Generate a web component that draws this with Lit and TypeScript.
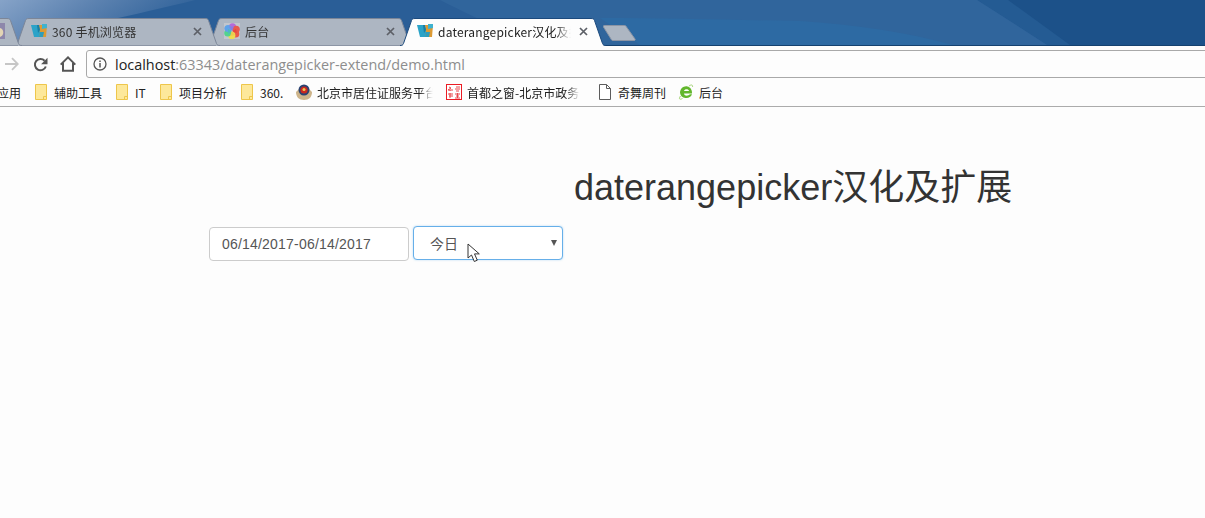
import { LitElement, html, css, svg, unsafeCSS } from "lit";
import { customElement } from "lit/decorators.js";

const CJK = unsafeCSS(`"Noto Sans CJK SC", "Liberation Sans", sans-serif`);

const wsIcon = html`<svg class="fav" viewBox="0 0 16 16">
  <path d="M0 2h7l2 3v9H3z" fill="#2ba3c8"/>
  <path d="M8 2h8l-1 12H8l1-4z" fill="#dc9a34"/>
  <path d="M6 2l2 0 1 5-2 3z" fill="#1a7ea4"/>
  <path d="M11 1h5v4l-5 1z" fill="#3fb2cf"/>
  <path d="M9 9h4l-1 5H8z" fill="#2f9dbb"/>
</svg>`;

const oldIcon = html`<svg class="fav" viewBox="0 0 16 16">
  <rect width="16" height="16" fill="#8d87ab"/>
  <path d="M4 11c0-4 3-6 6-6s5 3 4 6-3 3-5 3-5-1-5-3z" fill="#e3d5b4"/>
</svg>`;

const wheelIcon = html`<svg class="fav" viewBox="0 0 16 16">
  <rect width="16" height="16" fill="#c2c6cd"/>
  <circle cx="8.500" cy="3.800" r="3.600" fill="#b56ad9"/>
  <circle cx="12.200" cy="6.300" r="3.600" fill="#e85a50"/>
  <circle cx="11.700" cy="11" r="3.600" fill="#e9594a"/>
  <circle cx="7.800" cy="12.400" r="3.600" fill="#ecdd4f"/>
  <circle cx="3.800" cy="10" r="3.600" fill="#52d38e"/>
  <circle cx="4" cy="5.500" r="3.600" fill="#5fa3ea"/>
  <path d="M8 8L5 3.500h5z" fill="#8d7ae0"/>
  <path d="M8 8l4-2 1 4z" fill="#e5483f"/>
  <path d="M8 8l3 4-5 1z" fill="#ecc94f"/>
  <path d="M8 8l-4 3 0-5z" fill="#4fb8c0"/>
</svg>`;

const folder = html`<svg class="folder" viewBox="0 0 12 16">
  <path d="M.5.5h11v15H.5z" fill="#fde89a" stroke="#eec64b"/>
  <path d="M8.500 15.500v-3h3" fill="none" stroke="#eec64b"/>
</svg>`;

const emblem = html`<svg class="bm16" viewBox="0 0 16 16">
  <path d="M0 8c0 5 3 8 8 8s8-3 8-8l-3-3H3z" fill="#cdb48a"/>
  <circle cx="8" cy="6" r="5.500" fill="#2a4272"/>
  <circle cx="8" cy="6" r="3.600" fill="#c9281f"/>
  <circle cx="8" cy="5.500" r="1.500" fill="#eccb54"/>
</svg>`;

const capital = html`<svg class="bm16" viewBox="0 0 16 16">
  <rect x=".5" y=".5" width="15" height="15" fill="#fff" stroke="#ec1c24"/>
  <path d="M3 3l2 1-3 2h5M4 6v1M10 3h4M9 5h5M10 7h3M2 10h5M3 12h4M4 9v5M9 10h5M10 12h3M9 14h5M11.500 9v5"
    fill="none" stroke="#e8474c" stroke-width="1"/>
</svg>`;

const pageIcon = html`<svg class="bm16" viewBox="0 0 16 16">
  <path d="M2.500.5h7l4 4v11h-11z" fill="#fff" stroke="#5c5c5c"/>
  <path d="M9.500.5v4h4" fill="none" stroke="#5c5c5c"/>
</svg>`;

const ieIcon = html`<svg class="bm16" viewBox="0 0 16 16">
  <path d="M14 9.500H6c.3 2.700 4 3 5.800.8H14a6.300 6.300 0 0 1-12-1.500C2 4.500 6 1.500 9.500 2.500c3 .7 4.800 3.500 4.500 7z" fill="#62b72d"/>
  <path d="M6 7h5c-.2-2.200-4.500-2.500-5 0z" fill="#fff"/>
  <path d="M11 2c2-1.500 4-1.500 3.500 1M2.500 12c-2 3-1 4 2 2.500" fill="none" stroke="#a5d476"/>
</svg>`;

const closeX = html`<svg class="x" viewBox="0 0 9 9"><path d="M1 1l7 7M8 1L1 8" stroke="#5d6067" stroke-width="1.700" fill="none"/></svg>`;

/* a tab outline: slanted sides, rounded at the top */
const tabShape = (w: number, active: boolean) => html`<svg class="shape" width=${w} height="28" viewBox="0 0 ${w} 28">
  ${svg`<path d="M0 28c2 0 3-1 3.500-2.500L11.500 2.500C12 1 13 .5 15 .5H${w - 15}c2 0 3 .5 3.500 2L${w - 3.5} 25.500c.5 1.500 1.500 2.500 3.500 2.500z"
    fill=${active ? "#fdfdfd" : "#adb6c2"} stroke="none"/>
    <path d="M0 27.500c2 0 3-.5 3.500-2L11.500 2.500C12 1 13 .5 15 .5H${w - 15}c2 0 3 .5 3.500 2L${w - 3.5} 25.500c.5 1.500 1.500 2 3.500 2"
    fill="none" stroke=${active ? "#1c4a7d" : "#7c8698"}/>
    ${active ? "" : svg`<path d="M4 27.500H${w - 4}" stroke="#8c95a5"/>`}`}
</svg>`;

const tabs = [
  { w: 201, icon: oldIcon, label: "", first: true },
  { w: 206, icon: wsIcon, label: "360 手机浏览器" },
  { w: 206, icon: wheelIcon, label: "后台" },
  { w: 206, icon: wsIcon, label: "daterangepicker汉化及扩展", active: true },
];

const bookmarks = [
  { icon: folder, label: "辅助工具", w: 81 },
  { icon: folder, label: "IT", w: 44 },
  { icon: folder, label: "项目分析", w: 81 },
  { icon: folder, label: "360.", w: 55 },
  { icon: emblem, label: "北京市居住证服务平台", w: 150, fade: true, cut: "cut1" },
  { icon: capital, label: "首都之窗-北京市政务", w: 151, fade: true, cut: "cut2" },
  { icon: pageIcon, label: "奇舞周刊", w: 81 },
  { icon: ieIcon, label: "后台", w: 60 },
];

@customElement("app-root")
export class AppRoot extends LitElement {
  static styles = css`
    :host { display: block; width: 1205px; height: 518px; overflow: hidden; background: #fdfdfd; font-family: ${CJK}; }
    .strip { position: relative; height: 46px; background: #1c5189; overflow: hidden; }
    .wall { position: absolute; inset: 0; }
    .tabs { position: relative; display: flex; align-items: flex-end; height: 46px; margin-left: -179px; }
    .tab { position: relative; height: 28px; flex: none; margin-right: -13px; display: flex; align-items: center; font-size: 12px; color: #333; box-sizing: border-box; padding: 0 18px 2px 17px; z-index: 1; }
    .tab.first { margin-right: -8px; padding-left: 168px; z-index: 3; }
    .tab:nth-child(2) { z-index: 2; }
    .tab.on { color: #222; z-index: 4; }
    .shape { position: absolute; left: 0; top: 0; }
    .tab > *:not(.shape) { position: relative; }
    .fav { width: 16px; height: 16px; margin-right: 5px; flex: none; }
    .title { flex: 1; white-space: nowrap; overflow: hidden; min-width: 0; margin-right: 8px; letter-spacing: .2px; -webkit-mask-image: linear-gradient(90deg, #000 88%, transparent); mask-image: linear-gradient(90deg, #000 88%, transparent); }
    .x { width: 9px; height: 9px; flex: none; }
    .newtab { position: relative; flex: none; width: 33px; height: 16px; margin: 0 0 5px 10px; z-index: 5; }
    .toolbar { height: 32px; box-sizing: border-box; background: #fdfdfd; display: flex; align-items: center; padding: 4px 0 0 5px; }
    .nav { flex: none; }
    .back { width: 14px; height: 14px; margin-right: 14px; }
    .reload { margin-right: 12px; width: 15px; height: 15px; }
    .home { margin-right: 10px; width: 16px; height: 16px; }
    .omni { flex: 1; height: 28px; margin-right: -4px; box-sizing: border-box; border: 1px solid #a9a9a9; border-radius: 3px; background: #fdfdfd; display: flex; align-items: center; padding-left: 6px; font: 14.400px "Open Sans", sans-serif; color: #8d8d8d; }
    .info { width: 14px; height: 14px; margin-right: 8px; flex: none; }
    .host { color: #222; }
    .bar { height: 29px; box-sizing: border-box; border-bottom: 1px solid #ababab; background: #fdfdfd; display: flex; align-items: center; font-size: 12px; color: #222; }
    .apps { width: 35px; flex: none; padding-right: 14px; box-sizing: border-box; white-space: nowrap; display: flex; justify-content: flex-end; }
    .bm { display: flex; align-items: center; flex: none; box-sizing: border-box; white-space: nowrap; overflow: hidden; }
    .bm.cut1 { padding-right: 13px; }
    .bm.cut2 { padding-right: 17px; }
    .bm span { overflow: hidden; flex: 1; min-width: 0; }
    .bm span.fade { -webkit-mask-image: linear-gradient(90deg, #000 88%, transparent); mask-image: linear-gradient(90deg, #000 88%, transparent); }
    .folder { width: 12px; height: 16px; margin-right: 7px; flex: none; }
    .bm16 { width: 16px; height: 16px; margin-right: 5px; flex: none; }
    main { display: flex; flex-direction: column; }
    h1 { margin: 61px 0 0 574px; font: 400 36px/40px "Liberation Sans", "Noto Sans CJK SC", sans-serif; color: #333; white-space: nowrap; }
    .row { display: flex; align-items: flex-start; gap: 4px; margin: 18px 0 0 209px; }
    .field { box-sizing: border-box; height: 34px; border-radius: 4px; font: 14px "Liberation Sans", "Noto Sans CJK SC", sans-serif; color: #555; display: flex; align-items: center; background: #fff; }
    .date { width: 200px; margin-top: 1px; padding-left: 12px; border: 1px solid #ccc; letter-spacing: .2px; }
    .sel { position: relative; width: 150px; padding-left: 16px; border: 1px solid #66afe9; box-shadow: 0 0 2px rgba(102, 175, 233, .5); }
    .caret { position: absolute; right: 5px; top: 13px; width: 6px; height: 6px; }
    .cursor { position: absolute; left: 53px; top: 16px; width: 14px; height: 20px; }
  `;

  render() {
    return html`
      <div class="strip">
        <svg class="wall" width="1205" height="46" viewBox="0 0 1205 46">
          <defs>
            <linearGradient id="glow" x1="0" y1="0" x2="1" y2=".35">
              <stop offset="0" stop-color="#86a3c8"/>
              <stop offset=".45" stop-color="#5c82b0"/>
              <stop offset="1" stop-color="#2a5e97"/>
            </linearGradient>
          </defs>
          <path d="M0 0h1008l62 45H0z" fill="#245b93"/>
          <path d="M0 0h977l70 45H0z" fill="#2a5e97"/>
          <path d="M440 0h537l70 45H540C500 30 470 15 440 0z" fill="#30659c"/>
          <path d="M600 18c70 0 130 2 200 3 60 4 110 12 153 24H640z" fill="#2d6aa3"/>
          <path d="M0 0h195C140 14 60 30 0 46z" fill="url(#glow)"/>
          <path d="M0 45.500h1205" stroke="#15416f"/>
        </svg>
        <div class="tabs">
          ${tabs.map(
            (t) => html`<div class="tab ${t.first ? "first" : ""} ${t.active ? "on" : ""}" style="width:${t.w}px">
              ${tabShape(t.w, !!t.active)}${t.icon}${t.first ? "" : html`<span class="title">${t.label}</span>${closeX}`}
            </div>`
          )}
          <svg class="newtab" viewBox="0 0 33 16"><path d="M1.500.5h20c1 0 1.500.5 2 1.500l8.500 12c.5 1 0 1.500-1 1.500H10c-1 0-1.500-.5-2-1.500L.5 2C0 1 .5.500 1.500.5z" fill="#adb6c2" stroke="#8c95a5"/></svg>
        </div>
      </div>
      <div class="toolbar">
        <svg class="nav back" viewBox="0 0 14 14"><path d="M0 7h13M7 1.200L12.800 7 7 12.800" fill="none" stroke="#c6c6c6" stroke-width="1.800"/></svg>
        <svg class="nav reload" viewBox="0 0 15 15"><path d="M12.800 9.500a5.600 5.600 0 1 1-1.200-5.700" fill="none" stroke="#555" stroke-width="2"/><path d="M14.500 .8v6.400H8.100z" fill="#555"/></svg>
        <svg class="nav home" viewBox="0 0 16 16"><path d="M.7 8.600L8 1.400l7.300 7.200M3 7v7.800h10V7" fill="none" stroke="#555" stroke-width="2"/></svg>
        <div class="omni">
          <svg class="info" viewBox="0 0 14 14"><circle cx="7" cy="7" r="6" fill="none" stroke="#555" stroke-width="1.300"/><path d="M7 6v4.500M7 3.500v1.500" stroke="#555" stroke-width="1.500"/></svg>
          <span><span class="host">localhost</span>:63343/daterangepicker-extend/demo.html</span>
        </div>
      </div>
      <div class="bar">
        <div class="apps">应用</div>
        ${bookmarks.map(
          (b) => html`<div class="bm ${b.cut ?? ""}" style="width:${b.w}px">${b.icon}<span class=${b.fade ? "fade" : ""}>${b.label}</span></div>`
        )}
      </div>
      <main>
        <h1>daterangepicker汉化及扩展</h1>
        <div class="row">
          <div class="field date">06/14/2017-06/14/2017</div>
          <div class="field sel">今日
            <svg class="caret" viewBox="0 0 6 6"><path d="M0 0h6L3 6z" fill="#555"/></svg>
            <svg class="cursor" viewBox="0 0 14 20"><path d="M1 1v14l3.500-3 2.800 6.500 3-1.300-2.800-6.300h4.800z" fill="#fff" stroke="#333"/></svg>
          </div>
        </div>
      </main>
    `;
  }
}
